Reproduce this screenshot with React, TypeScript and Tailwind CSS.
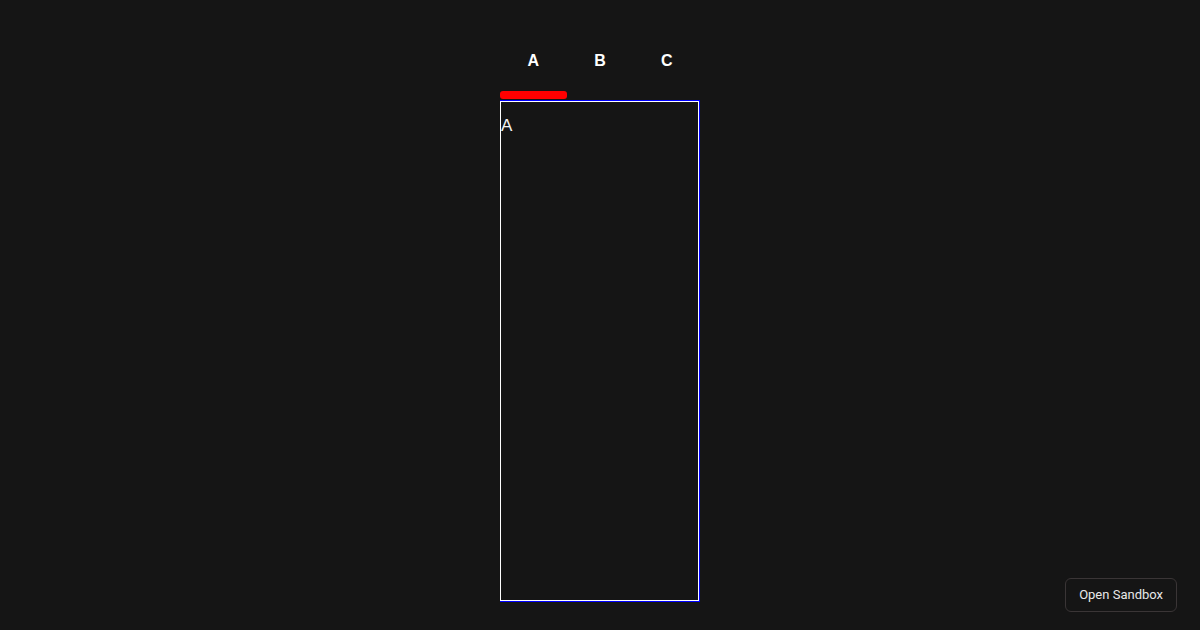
import { useState } from "react";

const tabs = ["A", "B", "C"];

export default function App() {
  const [active, setActive] = useState(0);

  return (
    <div className="relative min-h-[630px] w-full bg-[#151515] font-['Liberation_Sans',Arial,sans-serif] text-[#f2f2f2]">
      <div className="mx-auto flex w-[200px] flex-col pt-[41px]">
        {/* Tab row */}
        <div className="flex h-10">
          {tabs.map((t, i) => (
            <button
              key={t}
              type="button"
              onClick={() => setActive(i)}
              className="flex flex-1 items-center justify-center text-base font-bold text-white"
            >
              {t}
            </button>
          ))}
        </div>

        {/* Indicator */}
        <div className="mt-[10px] flex">
          <div
            className="h-2 w-[67px] rounded-[3px] bg-[#ff0000]"
            style={{ marginLeft: active * 67 }}
          />
        </div>

        {/* Panel: blue frame on top/right/bottom, white border inside */}
        <div className="mt-px w-[200px] bg-[#0000ff] pt-px pr-px pb-px">
          <div className="h-[500px] w-[199px] border border-white bg-[#151515] pt-[12px] text-[17px] leading-6">
            {tabs[active]}
          </div>
        </div>
      </div>

      <button
        type="button"
        className="absolute right-[23px] bottom-[18px] h-[34px] rounded-md border border-[#3a3536] bg-[#151515] px-[13px] font-['Roboto',sans-serif] text-[13px] text-[#e8e8e8]"
      >
        Open Sandbox
      </button>
    </div>
  );
}
